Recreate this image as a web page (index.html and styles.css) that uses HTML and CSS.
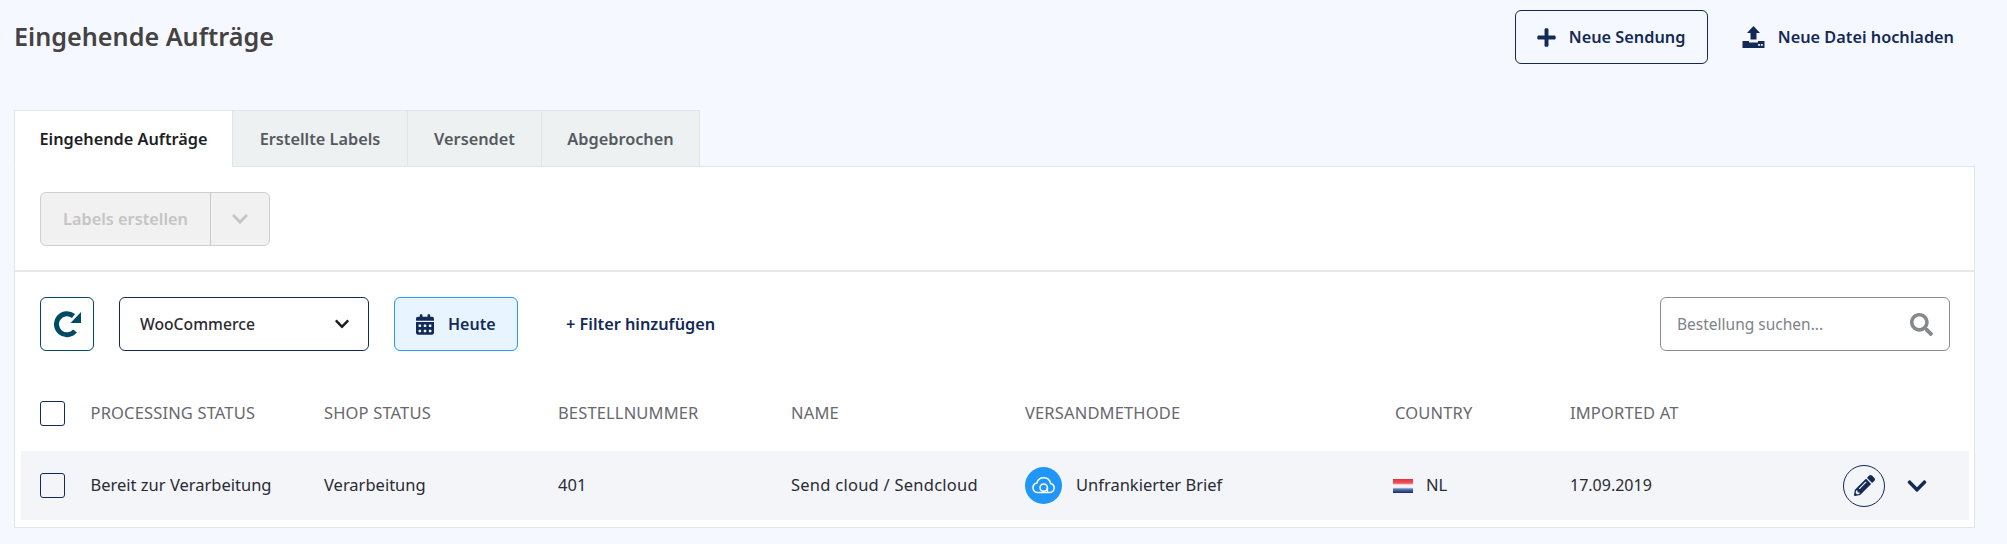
FILE: index.html
```html
<!DOCTYPE html>
<html lang="de">
<head>
<meta charset="utf-8">
<title>Eingehende Aufträge</title>
<link rel="stylesheet" href="styles.css">
</head>
<body>
<header class="top">
  <h1 class="title">Eingehende Aufträge</h1>
  <div class="actions">
    <button class="btn-new"><svg class="ic-plus" viewBox="0 0 448 512"><path d="M416 208H272V64c0-17.67-14.33-32-32-32h-32c-17.67 0-32 14.33-32 32v144H32c-17.67 0-32 14.33-32 32v32c0 17.67 14.33 32 32 32h144v144c0 17.67 14.33 32 32 32h32c17.67 0 32-14.33 32-32V304h144c17.67 0 32-14.33 32-32v-32c0-17.67-14.33-32-32-32z"/></svg>Neue Sendung</button>
    <button class="btn-upload"><svg class="ic-upload" viewBox="0 0 22 22"><path fill-rule="evenodd" d="M11 0l6.5 7H14v6.5H8V7H4.5zM0 15h6.5v1.5h9V15H22v6.5a.5.5 0 0 1-.5.5H.5a.5.5 0 0 1-.5-.5zM15.6 18v1.7h1.8V18zM18.4 18v1.7h1.8V18z"/></svg>Neue Datei hochladen</button>
  </div>
</header>

<nav class="tabs">
  <div class="tab tab-active t1">Eingehende Aufträge</div>
  <div class="tab t2">Erstellte Labels</div>
  <div class="tab t3">Versendet</div>
  <div class="tab t4">Abgebrochen</div>
</nav>

<main class="panel">
  <section class="bulk">
    <div class="split">
      <span class="split-main">Labels erstellen</span>
      <span class="split-arrow"><svg class="ic-chev-dis" viewBox="0 0 448 512"><path d="M207.029 381.476L12.686 187.132c-9.373-9.373-9.373-24.569 0-33.941l22.667-22.667c9.357-9.357 24.522-9.375 33.901-.04L224 284.505l154.745-154.021c9.379-9.335 24.544-9.317 33.901.04l22.667 22.667c9.373 9.373 9.373 24.569 0 33.941L240.971 381.476c-9.373 9.372-24.569 9.372-33.942 0z"/></svg></span>
    </div>
  </section>

  <section class="filters">
    <button class="btn-refresh"><svg class="ic-redo" viewBox="0 0 27 27"><path class="redo-arc" d="M19.5 5A10.5 10.5 0 1 0 21 20"/><path d="M27 1v11H16.5z"/></svg></button>
    <div class="select"><span>WooCommerce</span><svg class="ic-chev-sel" viewBox="0 0 448 512"><path d="M207.029 381.476L12.686 187.132c-9.373-9.373-9.373-24.569 0-33.941l22.667-22.667c9.357-9.357 24.522-9.375 33.901-.04L224 284.505l154.745-154.021c9.379-9.335 24.544-9.317 33.901.04l22.667 22.667c9.373 9.373 9.373 24.569 0 33.941L240.971 381.476c-9.373 9.372-24.569 9.372-33.942 0z"/></svg></div>
    <button class="btn-date"><svg class="ic-cal" viewBox="0 0 448 512"><path d="M0 464c0 26.5 21.5 48 48 48h352c26.5 0 48-21.5 48-48V192H0v272zm320-196c0-6.6 5.4-12 12-12h40c6.6 0 12 5.4 12 12v40c0 6.6-5.4 12-12 12h-40c-6.6 0-12-5.4-12-12v-40zm0 128c0-6.6 5.4-12 12-12h40c6.6 0 12 5.4 12 12v40c0 6.6-5.4 12-12 12h-40c-6.6 0-12-5.4-12-12v-40zM192 268c0-6.6 5.4-12 12-12h40c6.6 0 12 5.4 12 12v40c0 6.6-5.4 12-12 12h-40c-6.6 0-12-5.4-12-12v-40zm0 128c0-6.6 5.4-12 12-12h40c6.6 0 12 5.4 12 12v40c0 6.6-5.4 12-12 12h-40c-6.6 0-12-5.4-12-12v-40zM64 268c0-6.6 5.4-12 12-12h40c6.6 0 12 5.4 12 12v40c0 6.6-5.4 12-12 12H76c-6.6 0-12-5.4-12-12v-40zm0 128c0-6.6 5.4-12 12-12h40c6.6 0 12 5.4 12 12v40c0 6.6-5.4 12-12 12H76c-6.6 0-12-5.4-12-12v-40zM400 64h-48V16c0-8.8-7.2-16-16-16h-32c-8.8 0-16 7.2-16 16v48H160V16c0-8.8-7.2-16-16-16h-32c-8.8 0-16 7.2-16 16v48H48C21.5 64 0 85.5 0 112v48h448v-48c0-26.5-21.5-48-48-48z"/></svg>Heute</button>
    <span class="add-filter">+ Filter hinzufügen</span>
    <div class="search"><span>Bestellung suchen...</span><svg class="ic-search" viewBox="0 0 512 512"><path d="M505 442.7L405.3 343c-4.5-4.5-10.6-7-17-7H372c27.6-35.3 44-79.7 44-128C416 93.1 322.9 0 208 0S0 93.1 0 208s93.1 208 208 208c48.3 0 92.7-16.4 128-44v16.3c0 6.4 2.5 12.5 7 17l99.7 99.7c9.4 9.4 24.6 9.4 33.9 0l28.3-28.3c9.4-9.4 9.4-24.6.1-34zM208 336c-70.7 0-128-57.2-128-128 0-70.7 57.2-128 128-128 70.7 0 128 57.2 128 128 0 70.7-57.2 128-128 128z"/></svg></div>
  </section>

  <section class="table">
    <div class="grid head">
      <span class="check"></span>
      <span class="cell">PROCESSING STATUS</span>
      <span class="cell">SHOP STATUS</span>
      <span class="cell">BESTELLNUMMER</span>
      <span class="cell">NAME</span>
      <span class="cell">VERSANDMETHODE</span>
      <span class="cell">COUNTRY</span>
      <span class="cell">IMPORTED AT</span>
    </div>
    <div class="grid row">
      <span class="check"></span>
      <span class="cell">Bereit zur Verarbeitung</span>
      <span class="cell">Verarbeitung</span>
      <span class="cell">401</span>
      <span class="cell cell-name">Send cloud / Sendcloud</span>
      <span class="method">
        <span class="cloud"><svg viewBox="0 0 37 37"><path class="cloud-line" d="M12.5 25.5h12.2a4.6 4.6 0 0 0 .8-9.1 7 7 0 0 0-13.6-.4 4.8 4.8 0 0 0 .6 9.5z"/><circle class="cloud-line" cx="18.7" cy="20.6" r="3.7"/><path class="cloud-line" d="M22.4 20.6v4.9"/></svg></span>
        <span class="cell">Unfrankierter Brief</span>
      </span>
      <span class="country"><span class="flag"></span><span class="cell">NL</span></span>
      <span class="cell cell-date">17.09.2019</span>
      <span class="row-actions">
        <button class="btn-edit"><svg class="ic-pencil" viewBox="0 0 512 512"><path d="M497.9 142.1l-46.1 46.1c-4.7 4.7-12.3 4.7-17 0l-111-111c-4.7-4.7-4.7-12.3 0-17l46.1-46.1c18.7-18.7 49.1-18.7 67.9 0l60.1 60.1c18.8 18.7 18.8 49.1 0 67.9zM284.2 99.8L21.6 362.4.4 483.9c-2.9 16.4 11.4 30.6 27.8 27.8l121.5-21.3 262.6-262.6c4.7-4.7 4.7-12.3 0-17l-111-111c-4.8-4.7-12.4-4.7-17.1 0zM124.1 339.9c-5.5-5.5-5.5-14.3 0-19.8l154-154c5.5-5.5 14.3-5.5 19.8 0s5.5 14.3 0 19.8l-154 154c-5.5 5.5-14.3 5.5-19.8 0zM88 424h48v36.3l-64.5 11.3-31.1-31.1L51.7 376H88v48z"/></svg></button>
        <svg class="ic-chev-row" viewBox="0 0 448 512"><path d="M207.029 381.476L12.686 187.132c-9.373-9.373-9.373-24.569 0-33.941l22.667-22.667c9.357-9.357 24.522-9.375 33.901-.04L224 284.505l154.745-154.021c9.379-9.335 24.544-9.317 33.901.04l22.667 22.667c9.373 9.373 9.373 24.569 0 33.941L240.971 381.476c-9.373 9.372-24.569 9.372-33.942 0z"/></svg>
      </span>
    </div>
  </section>
</main>
</body>
</html>
```

FILE: styles.css
```css
* { box-sizing: border-box; }
html, body { margin: 0; padding: 0; }
body {
  height: 544px;
  overflow: hidden;
  background: #f5f9ff;
  font-family: "Noto Sans", "Open Sans", sans-serif;
  font-size: 16.3px;
  color: #2b2b33;
  padding: 10px 32px 0 14px;
}
button { font-family: inherit; cursor: pointer; }
svg { display: block; fill: currentColor; }

.top { display: flex; justify-content: space-between; align-items: center; height: 54px; }
.title { margin: 0; font-size: 25.2px; font-weight: 600; color: #444242; position: relative; top: -1px; }
.actions { display: flex; align-items: center; gap: 34px; padding-right: 21px; }
.btn-new {
  display: flex; align-items: center; gap: 13px;
  width: 193px; height: 54px; padding: 0 0 0 21px;
  background: transparent; border: 1px solid #132a56; border-radius: 6px;
  color: #132a56; font-size: 16.3px; font-weight: 600;
}
.btn-upload {
  display: flex; align-items: center; gap: 13px; padding: 0;
  background: none; border: 0; color: #132a56; font-size: 16.3px; font-weight: 600;
}
.ic-plus { width: 19px; height: 21px; }
.ic-upload { width: 23px; height: 22px; }

.tabs { display: flex; margin-top: 46px; height: 57px; position: relative; z-index: 1; }
.tab {
  display: flex; align-items: center; justify-content: center;
  height: 57px; background: #edf1f2;
  border: 1px solid #dfe6e9; border-left: 0;
  font-weight: 600; color: #555a60;
}
.t1 { width: 219px; }
.t2 { width: 175px; }
.t3 { width: 134px; }
.t4 { width: 158px; }
.tab-active {
  background: #fff; color: #1e1e26;
  border-left: 1px solid #dfe6e9; border-bottom-color: #fff;
}

.panel {
  margin-top: -1px; height: 362px;
  background: #fff; border: 1px solid #dfe6e9;
}
.bulk { height: 105px; padding: 25px 0 0 25px; border-bottom: 2px solid #e6e8ea; }
.split {
  display: flex; width: 230px; height: 54px;
  background: #f1f1f1; border: 1px solid #cfcfcf; border-radius: 6px;
  color: #c4c4c4; font-weight: 600;
}
.split-main { display: flex; align-items: center; justify-content: center; width: 170px; border-right: 1px solid #c8c8c8; }
.split-arrow { display: flex; flex: 1; align-items: center; justify-content: center; }
.ic-chev-dis { width: 16px; height: 18px; }

.filters { display: flex; align-items: center; padding: 25px 24px 0 25px; height: 79px; }
.btn-refresh {
  display: flex; align-items: center; justify-content: center;
  width: 54px; height: 54px; padding: 0;
  background: #fff; border: 1px solid #004a66; border-radius: 6px; color: #004a66;
}
.ic-redo { width: 27px; height: 27px; }
.redo-arc { fill: none; stroke: currentColor; stroke-width: 5; }
.select {
  display: flex; align-items: center; justify-content: space-between;
  width: 250px; height: 54px; margin-left: 25px; padding: 0 19px 0 20px;
  border: 1px solid #132a56; border-radius: 6px;
  font-size: 15.7px; font-weight: 500; color: #2a2a30;
}
.ic-chev-sel { width: 14px; height: 16px; color: #1c1c24; }
.btn-date {
  display: flex; align-items: center; gap: 14px;
  width: 124px; height: 54px; margin-left: 25px; padding: 0 0 0 21px;
  background: #e8f4ff; border: 1px solid #2a9bf5; border-radius: 6px;
  color: #132a56; font-size: 16px; font-weight: 600;
}
.ic-cal { width: 18px; height: 21px; }
.add-filter { margin-left: 48px; font-weight: 600; color: #132a56; }
.search {
  display: flex; align-items: center; justify-content: space-between;
  width: 290px; height: 54px; margin-left: auto; padding: 0 16px 0 16px;
  border: 1px solid #8c8c8c; border-radius: 6px;
  font-size: 15.5px; color: #7d8489;
}
.ic-search { width: 23px; height: 23px; color: #85898c; }

.table { padding: 0 5px 0 6px; }
.grid {
  display: grid;
  grid-template-columns: 69.5px 233.5px 234px 233px 234px 370px 175px 273px 1fr;
  align-items: center;
}
.grid > .check { margin-left: 19px; }
.cell { padding-bottom: 2px; font-size: 16.5px; }
.head { height: 100px; padding-top: 25px; color: #68686e; }
.head .cell { letter-spacing: 0.15px; }
.row { height: 69px; background: #f3f5f9; color: #2b2b33; }
.row .cell-name { letter-spacing: 0.25px; }
.row .cell-date { font-size: 16px; }
.check {
  display: block; width: 25px; height: 25px;
  border: 1px solid #132a56; border-radius: 3px; background: #fff;
}
.row .check { background: transparent; }
.method { display: flex; align-items: center; gap: 14px; }
.cloud { display: block; width: 37px; height: 37px; border-radius: 50%; background: #2196f9; }
.cloud svg { width: 37px; height: 37px; }
.cloud-line { fill: none; stroke: #fff; stroke-width: 1.5; }
.country { display: flex; align-items: center; gap: 13px; margin-left: -2px; }
.flag {
  display: block; width: 20px; height: 14px;
  background: linear-gradient(#e8303c 0, #f0555f 30%, #f4f4f6 42%, #f4f4f6 60%, #5d7bb4 72%, #14286a 100%);
}
.row-actions { display: flex; align-items: center; gap: 22px; }
.btn-edit {
  display: flex; align-items: center; justify-content: center;
  width: 42px; height: 42px; padding: 0;
  background: transparent; border: 1px solid #132a56; border-radius: 50%; color: #132a56;
}
.ic-pencil { width: 21px; height: 21px; }
.ic-chev-row { width: 20px; height: 22px; color: #132a56; }
```
